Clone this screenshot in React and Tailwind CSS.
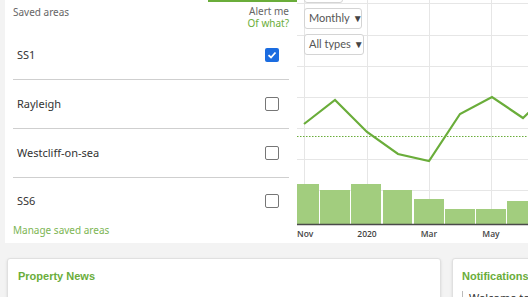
import React from 'react';

const areas = [
  { name: 'SS1', checked: true },
  { name: 'Rayleigh', checked: false },
  { name: 'Westcliff-on-sea', checked: false },
  { name: 'SS6', checked: false },
];

// chart coords are relative to the chart column (x starts at 297)
const linePts = [
  [7, 124], [38, 100], [70, 132], [101, 154], [132, 161],
  [163, 114], [195, 97], [226, 118], [240, 105],
];

const bars = [
  [0, 22, 184], [23, 30, 190], [54, 30, 184], [86, 29, 190],
  [117, 30, 199], [148, 30, 209], [179, 30, 209], [210, 30, 201],
];

const hLines = [3, 35, 66, 97, 128, 159, 190];
const vLines = [7, 70, 132, 194];

function Checkbox({ checked }) {
  if (checked) {
    return (
      <div className="w-[14px] h-[14px] rounded-[2px] bg-[#1b6ce0] flex items-center justify-center">
        <svg width="10" height="10" viewBox="0 0 10 10">
          <path d="M1.5 5.2 L4 7.5 L8.5 2.5" fill="none" stroke="white" strokeWidth="1.8" />
        </svg>
      </div>
    );
  }
  return <div className="w-[14px] h-[14px] rounded-[2px] border border-[#767676] bg-white" />;
}

function Dropdown({ label, width }) {
  return (
    <div
      className="h-[21px] border border-[#d4d4d4] rounded-[3px] bg-white flex items-center gap-[3px] px-[4px] text-[11px] text-[#555] whitespace-nowrap"
      style={{ width }}
    >
      {label}
      {label && <span className="text-[10px] text-[#444]">▼</span>}
    </div>
  );
}

function Chart() {
  const path = linePts.map(([x, y], i) => `${i ? 'L' : 'M'}${x} ${y}`).join(' ');
  return (
    <div className="relative flex-1 h-full">
      <svg width="240" height="243" className="block">
        {hLines.map((y) => (
          <line key={y} x1="0" x2="240" y1={y + 0.5} y2={y + 0.5} stroke="#e6e6e6" />
        ))}
        {vLines.map((x) => (
          <line key={x} x1={x + 0.5} x2={x + 0.5} y1="0" y2="224" stroke="#e6e6e6" />
        ))}
        {bars.map(([x, w, top]) => (
          <rect key={x} x={x} y={top} width={w} height={224 - top} fill="#a2cd7e" />
        ))}
        <line x1="0" x2="240" y1="136.5" y2="136.5" stroke="#6aad3a" strokeDasharray="1.5 1.5" />
        <line x1="0" x2="240" y1="224.5" y2="224.5" stroke="#4a4a4a" strokeWidth="1.5" />
        <path d={path} fill="none" stroke="#6aad3a" strokeWidth="2.2" strokeLinejoin="miter" />
        <g fontFamily="'Open Sans', sans-serif" fontSize="8.5" fontWeight="600" fill="#444">
          <text x="0" y="237">Nov</text>
          <text x="70" y="237" textAnchor="middle">2020</text>
          <text x="132" y="237" textAnchor="middle">Mar</text>
          <text x="194" y="237" textAnchor="middle">May</text>
        </g>
      </svg>
      <div className="absolute left-[7px] top-[-18px] flex flex-col gap-[5px] font-['Lato',sans-serif]">
        <Dropdown label="" width={39} />
        <Dropdown label="Monthly" width={58} />
        <Dropdown label="All types" width={60} />
      </div>
    </div>
  );
}

export default function App() {
  return (
    <div className="w-[528px] h-[297px] overflow-hidden bg-[#f3f3f3] font-['Noto_Sans',sans-serif]">
      {/* top panel */}
      <div className="ml-[5px] h-[243px] bg-white flex overflow-hidden">
        <div className="w-[292px] shrink-0 px-[8px] relative">
          <div className="absolute right-0 top-0 w-[89px] h-[2px] bg-[#6aad3a]" />
          <div className="h-[31px] flex justify-between pt-[5px]">
            <div className="text-[10px] text-[#666] leading-[14px]">Saved areas</div>
            <div className="text-right text-[10px] leading-[12px]">
              <div className="text-[#666]">Alert me</div>
              <div className="text-[#6aad3a]">Of what?</div>
            </div>
          </div>
          {areas.map((a, i) => (
            <div
              key={a.name}
              className={`flex items-center justify-between pl-[4px] pr-[10px] ${
                i < 3 ? 'h-[49px] border-b border-[#cfcfcf]' : 'h-[46px]'
              }`}
            >
              <span className="text-[11px] text-[#333]">{a.name}</span>
              <Checkbox checked={a.checked} />
            </div>
          ))}
          <div className="text-[10px] text-[#7cb553] leading-[12px]">Manage saved areas</div>
        </div>
        <Chart />
      </div>

      {/* bottom panels */}
      <div className="flex gap-[11px] pl-[7px] pt-[15px]">
        <div className="w-[434px] h-[60px] bg-white border border-[#e0e0e0] rounded-[3px] shadow-sm px-[10px] pt-[9px] shrink-0">
          <div className="text-[11px] font-bold text-[#6aad3a] font-['Liberation_Sans',sans-serif]">Property News</div>
        </div>
        <div className="w-[100px] h-[60px] bg-white border border-[#e0e0e0] rounded-[3px] shadow-sm px-[9px] pt-[9px] shrink-0">
          <div className="text-[11px] font-bold text-[#6aad3a] font-['Liberation_Sans',sans-serif] whitespace-nowrap">Notifications</div>
          <div className="mt-[6px] border-l border-[#bbb] pl-[6px] text-[11px] text-[#333] leading-[14px] whitespace-nowrap">Welcome to</div>
        </div>
      </div>
    </div>
  );
}
